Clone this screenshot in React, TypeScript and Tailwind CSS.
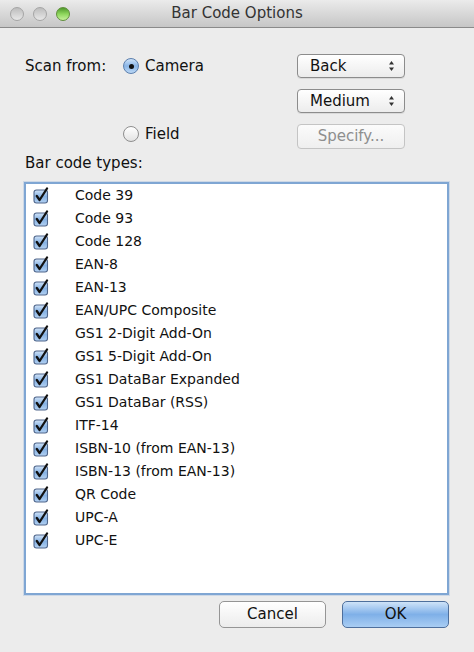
import React from "react";

const types = [
  "Code 39",
  "Code 93",
  "Code 128",
  "EAN-8",
  "EAN-13",
  "EAN/UPC Composite",
  "GS1 2-Digit Add-On",
  "GS1 5-Digit Add-On",
  "GS1 DataBar Expanded",
  "GS1 DataBar (RSS)",
  "ITF-14",
  "ISBN-10 (from EAN-13)",
  "ISBN-13 (from EAN-13)",
  "QR Code",
  "UPC-A",
  "UPC-E",
];

function Check() {
  return (
    <svg width="17" height="17" viewBox="0 0 17 17">
      <defs>
        <linearGradient id="cb" x1="0" y1="0" x2="0" y2="1">
          <stop offset="0" stopColor="#d2e4f8" />
          <stop offset="0.5" stopColor="#86b2e4" />
          <stop offset="1" stopColor="#b3d1f2" />
        </linearGradient>
      </defs>
      <rect x="1" y="3" width="13.5" height="13" rx="2.5" fill="url(#cb)" stroke="#50678c" strokeWidth="1.1" />
      <path d="M3.8 9 L6.6 13 L14 1.5" fill="none" stroke="#111" strokeWidth="2.3" strokeLinecap="round" strokeLinejoin="round" />
    </svg>
  );
}

function Radio({ on }: { on: boolean }) {
  return (
    <span
      className={
        "flex h-[16px] w-[16px] items-center justify-center rounded-full border " +
        (on
          ? "border-[#5b7fae] bg-gradient-to-b from-[#cfe3f8] via-[#8ab5e6] to-[#bcd8f5]"
          : "border-[#8e8e8e] bg-gradient-to-b from-white to-[#e3e3e3]")
      }
    >
      {on && <span className="h-[5px] w-[5px] rounded-full bg-[#111]" />}
    </span>
  );
}

function Updown() {
  return (
    <svg width="7" height="12" viewBox="0 0 7 12">
      <path d="M3.5 1 L6 4.5 H1 Z" fill="#333" />
      <path d="M3.5 11 L6 7.5 H1 Z" fill="#333" />
    </svg>
  );
}

function Popup({ label }: { label: string }) {
  return (
    <div className="flex h-[24px] w-[108px] items-center justify-between rounded-[4px] border border-[#8c8c8c] bg-gradient-to-b from-white to-[#ececec] pl-[12px] pr-[9px] text-[15px] text-[#111] shadow-[0_1px_0_rgba(0,0,0,0.08)]">
      <span>{label}</span>
      <Updown />
    </div>
  );
}

export default function App() {
  return (
    <div
      className="flex h-[652px] w-[474px] flex-col bg-[#ececec] text-[#111]"
      style={{ fontFamily: '"DejaVu Sans", "Lucida Grande", sans-serif' }}
    >
      {/* title bar */}
      <div className="relative flex h-[28px] shrink-0 items-center justify-center border-b border-[#8a8a8a] bg-gradient-to-b from-[#ebebeb] to-[#c6c6c6]">
        <div className="absolute left-[10px] top-[7px] flex gap-[9px]">
          <span className="h-[14px] w-[14px] rounded-full border border-[#a5a5a5] bg-gradient-to-b from-[#bdbdbd] to-[#e8e8e8]" />
          <span className="h-[14px] w-[14px] rounded-full border border-[#a5a5a5] bg-gradient-to-b from-[#bdbdbd] to-[#e8e8e8]" />
          <span className="h-[14px] w-[14px] rounded-full border border-[#5f8f3a] bg-gradient-to-b from-[#4f9a2c] via-[#8ed65c] to-[#c6f19a]" />
        </div>
        <span className="text-[15px] text-[#333]">Bar Code Options</span>
      </div>

      <div className="flex flex-1 flex-col px-[24px] pt-[26px]">
        {/* scan from */}
        <div className="flex">
          <div className="flex w-[272px] flex-col">
            <div className="flex h-[24px] items-center">
              <span className="w-[99px] pl-[1px] text-[15px]">Scan from:</span>
              <Radio on />
              <span className="ml-[6px] text-[15px]">Camera</span>
            </div>
            <div className="mt-[44px] flex h-[24px] items-center pl-[99px]">
              <Radio on={false} />
              <span className="ml-[6px] text-[15px]">Field</span>
            </div>
          </div>
          <div className="flex flex-col gap-[11px] pl-[1px]">
            <Popup label="Back" />
            <Popup label="Medium" />
            <div className="flex h-[25px] w-[108px] items-center justify-center rounded-[4px] border border-[#c4c4c4] bg-gradient-to-b from-[#fbfbfb] to-[#efefef] text-[15px] text-[#8e8e8e]">
              Specify...
            </div>
          </div>
        </div>

        <div className="mt-[3px] pl-[1px] text-[15px]">Bar code types:</div>

        {/* list */}
        <div className="mt-[7px] h-[413px] w-[425px] border-2 border-[#7fa6d3] bg-white shadow-[0_0_0_1px_rgba(150,180,220,0.35)]">
          {types.map((t) => (
            <div key={t} className="flex h-[23px] items-center pl-[7px]">
              <Check />
              <span className="ml-[25px] text-[14px] text-[#111]">{t}</span>
            </div>
          ))}
        </div>

        {/* buttons */}
        <div className="mt-[6px] flex justify-end gap-[16px] pr-[1px]">
          <div className="flex h-[27px] w-[107px] items-center justify-center rounded-[5px] border border-[#959595] bg-gradient-to-b from-white to-[#ececec] text-[15px]">
            Cancel
          </div>
          <div className="flex h-[27px] w-[107px] items-center justify-center rounded-[5px] border border-[#4e6f9c] bg-gradient-to-b from-[#cfe3f8] via-[#7fb0e8] to-[#a9cdf3] text-[15px]">
            OK
          </div>
        </div>
      </div>
    </div>
  );
}
